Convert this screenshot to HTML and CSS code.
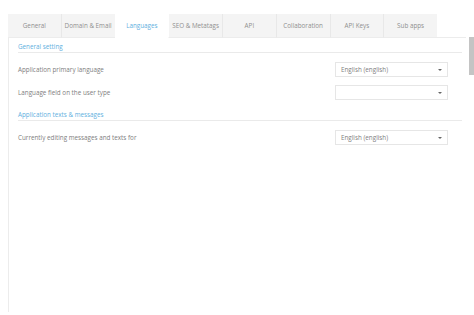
FILE: index.html
```html
<!DOCTYPE html>
<html lang="en">

<head>
    <meta charset="UTF-8">
    <title>Settings</title>
    <link rel="stylesheet" href="styles.css">
</head>

<body>
    <div class="page">
        <div class="tabs">
            <div class="tab">General</div>
            <div class="tab">Domain &amp; Email</div>
            <div class="tab active">Languages</div>
            <div class="tab">SEO &amp; Metatags</div>
            <div class="tab">API</div>
            <div class="tab">Collaboration</div>
            <div class="tab">API Keys</div>
            <div class="tab">Sub apps</div>
        </div>
        <div class="panel">
            <div class="section-title">General setting</div>
            <div class="row">
                <span class="label">Application primary language</span>
                <div class="select">English (english)<span class="caret"></span></div>
            </div>
            <div class="row">
                <span class="label">Language field on the user type</span>
                <div class="select"><span class="caret"></span></div>
            </div>
            <div class="section-title">Application texts &amp; messages</div>
            <div class="row">
                <span class="label">Currently editing messages and texts for</span>
                <div class="select">English (english)<span class="caret"></span></div>
            </div>
        </div>
    </div>
    <div class="scrollbar"></div>
</body>

</html>
```

FILE: styles.css
```css
* {
    padding: 0;
    margin: 0;
    box-sizing: border-box;
}

body {
    background: #fff;
    font-family: "Open Sans", "Liberation Sans", sans-serif;
    font-size: 6.3px;
    color: #808080;
}

.page {
    padding: 14px 0 0 8px;
    width: 466px;
}

.tabs {
    display: flex;
    width: 429px;
    position: relative;
    z-index: 1;
    margin-bottom: -1px;
}

.tab {
    flex: 1;
    height: 24px;
    display: flex;
    align-items: center;
    justify-content: center;
    background: #f4f4f4;
    border-left: 1px solid #e8e8e8;
    border-bottom: 1px solid #ececec;
    color: #909090;
}

.tab:first-child {
    border-left: none;
}

.tab.active {
    background: #fff;
    color: #5fb0e0;
    border-left-color: #fff;
    border-bottom-color: #fff;
}

.tab.active + .tab {
    border-left-color: #fff;
}

.panel {
    height: 275px;
    border-left: 1px solid #ececec;
    border-top: 1px solid #ececec;
    padding: 3px 4px 0 9px;
}

.section-title {
    color: #5fb0e0;
    height: 12px;
    line-height: 12px;
    border-bottom: 1px solid #eaeaea;
    margin-bottom: 9px;
}

.row {
    display: flex;
    justify-content: space-between;
    align-items: center;
    height: 15px;
    margin-bottom: 8px;
    padding-right: 14px;
}

.row:nth-child(3) {
    margin-bottom: 9px;
}

.select {
    position: relative;
    width: 113px;
    height: 15px;
    border: 1px solid #e6e6e6;
    padding-left: 5px;
    line-height: 13px;
    color: #808080;
}

.caret {
    position: absolute;
    right: 5px;
    top: 6px;
    border-left: 2px solid transparent;
    border-right: 2px solid transparent;
    border-top: 2px solid #666;
}

.scrollbar {
    position: absolute;
    right: 0;
    top: 37px;
    width: 5px;
    height: 38px;
    background: #c4c4c4;
}
```
